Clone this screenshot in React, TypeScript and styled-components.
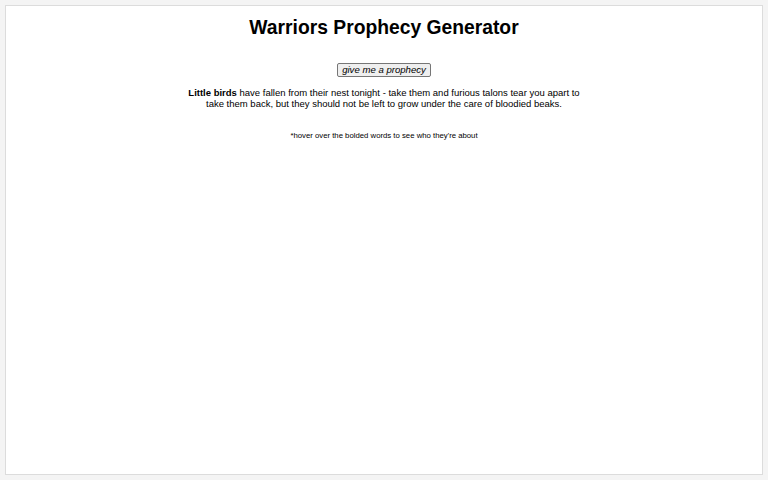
import styled, { createGlobalStyle } from "styled-components";

const GlobalStyle = createGlobalStyle`
  html, body {
    margin: 0;
    padding: 0;
    background: #f4f4f4;
  }
  body {
    font-family: "Liberation Sans", Arial, sans-serif;
    color: #000;
  }
`;

const Page = styled.div`
  padding: 5px;
  height: 480px;
  box-sizing: border-box;
`;

const Frame = styled.main`
  height: 100%;
  box-sizing: border-box;
  background: #fff;
  border: 1px solid #dcdcdc;
  display: flex;
  flex-direction: column;
  align-items: center;
  padding-top: 13px;
`;

const Title = styled.h1`
  margin: 0;
  font-size: 19.3px;
  font-weight: bold;
  line-height: 18px;
`;

const Button = styled.button`
  margin-top: 26px;
  font-family: "Liberation Sans", Arial, sans-serif;
  font-style: italic;
  font-size: 9.6px;
  color: #000;
  background: #efefef;
  border: 1px solid #767676;
  border-radius: 2px;
  padding: 1px 4px;
  height: 14px;
  line-height: 10px;
  cursor: pointer;
`;

const Prophecy = styled.p`
  margin: 10px 0 0;
  max-width: 394px;
  text-align: center;
  font-size: 9.5px;
  line-height: 11px;

  & b {
    cursor: help;
  }
`;

const Hint = styled.p`
  margin: 22px 0 0;
  font-size: 7.75px;
  line-height: 9px;
`;

const App = () => {
  return (
    <Page>
      <GlobalStyle />
      <Frame>
        <Title>Warriors Prophecy Generator</Title>
        <Button>give me a prophecy</Button>
        <Prophecy>
          <b>Little birds</b> have fallen from their nest tonight - take them
          and furious talons tear you apart to take them back, but they should
          not be left to grow under the care of bloodied beaks.
        </Prophecy>
        <Hint>*hover over the bolded words to see who they're about</Hint>
      </Frame>
    </Page>
  );
};

export default App;
